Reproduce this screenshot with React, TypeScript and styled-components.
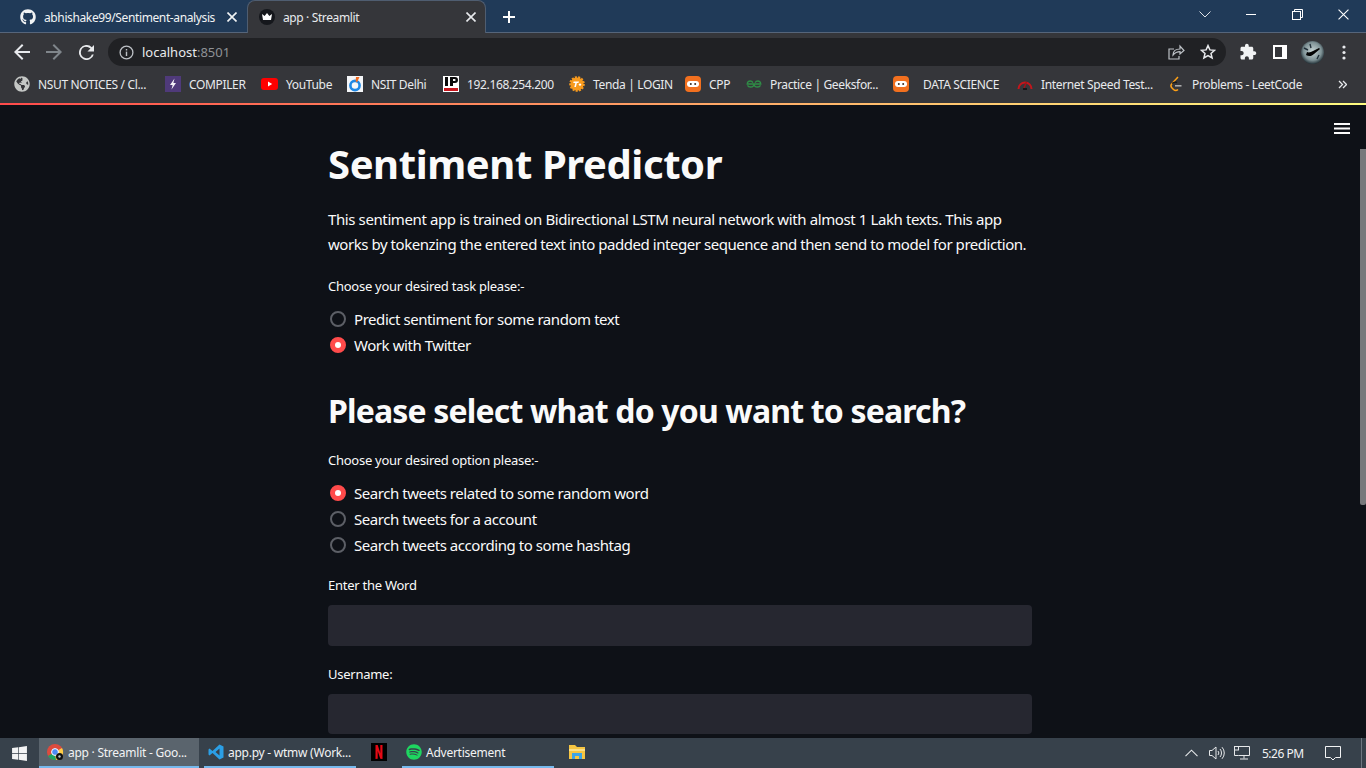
import React from "react";
import styled, { createGlobalStyle } from "styled-components";
import { FaGithub, FaGlobeAmericas, FaSpotify, FaWindows } from "react-icons/fa";

const GlobalStyle = createGlobalStyle`
    html, body {
        margin: 0;
        padding: 0;
        height: 100%;
        overflow: hidden;
        background: #0e1117;
    }
    * {
        box-sizing: border-box;
    }
`;

const Shell = styled.div`
    width: 1366px;
    height: 768px;
    display: flex;
    flex-direction: column;
    overflow: hidden;
    font-family: "Noto Sans", "Liberation Sans", sans-serif;
`;

const TabStrip = styled.div`
    height: 33px;
    background: #203a58;
    box-shadow: inset 0 -1px #56657a;
    display: flex;
    padding-left: 8px;
    color: #fff;
    flex: none;
`;

const Tab = styled.div<{ $active?: boolean }>`
    width: 239px;
    height: 33px;
    display: flex;
    align-items: center;
    gap: 8px;
    padding: 0 9px 0 11px;
    font-size: 12px;
    letter-spacing: -0.38px;
    border-radius: 8px 8px 0 0;
    color: ${(p) => (p.$active ? "#e8eaed" : "#f1f3f4")};
    background: ${(p) => (p.$active ? "#35363a" : "transparent")};
    border: 1px solid ${(p) => (p.$active ? "#4f5d70" : "transparent")};
    border-bottom: none;
`;

const TabTitle = styled.span`
    flex: 1;
    white-space: nowrap;
    overflow: hidden;
`;

const NewTab = styled.div`
    width: 46px;
    display: flex;
    justify-content: center;
    align-items: center;
`;

const Spacer = styled.div`
    flex: 1;
`;

const WindowButton = styled.div`
    width: 46px;
    height: 29px;
    display: flex;
    align-items: center;
    justify-content: center;
    color: #fff;
`;

const Toolbar = styled.div`
    height: 38px;
    background: #35363a;
    display: flex;
    align-items: center;
    padding: 0 5px 0 6px;
    color: #e8eaed;
    flex: none;
`;

const NavButton = styled.div<{ $dim?: boolean }>`
    width: 32px;
    display: flex;
    justify-content: center;
    color: ${(p) => (p.$dim ? "#80868b" : "#e8eaed")};
`;

const Omnibox = styled.div`
    width: 1118px;
    height: 28px;
    margin: 0 6px;
    border-radius: 14px;
    background: #202124;
    display: flex;
    align-items: center;
    padding: 0 2px 0 11px;
    font-size: 13px;
`;

const Host = styled.span`
    margin-left: 8px;
`;

const Port = styled.span`
    color: #8f9296;
`;

const OmniIcon = styled.div`
    width: 32px;
    display: flex;
    justify-content: center;
    color: #bdc1c6;
`;

const ToolIcon = styled.div`
    width: 32px;
    display: flex;
    justify-content: center;
    align-items: center;
`;

const Bookmarks = styled.div`
    height: 32px;
    background: #35363a;
    display: flex;
    align-items: flex-start;
    padding: 5px 19px 0 14px;
    color: #e8eaed;
    font-size: 12px;
    letter-spacing: -0.35px;
    flex: none;
`;

const Bookmark = styled.div<{ $width: number; $gap?: number }>`
    width: ${(p) => p.$width}px;
    height: 16px;
    display: flex;
    align-items: center;
    gap: ${(p) => p.$gap ?? 8}px;
    white-space: nowrap;
`;

const OverflowChevron = styled.div`
    height: 16px;
    display: flex;
    align-items: center;
`;

const RainbowLine = styled.div`
    height: 2px;
    flex: none;
    background: linear-gradient(90deg, #ff4b4b, #fffd80);
`;

const Viewport = styled.div`
    flex: 1;
    min-height: 0;
    background: #0e1117;
    position: relative;
    overflow: hidden;
    display: flex;
    justify-content: center;
    padding-right: 6px;
    color: #fafafa;
`;

const HamburgerButton = styled.div`
    position: absolute;
    top: 18px;
    right: 16px;
    display: flex;
`;

const ScrollThumb = styled.div`
    position: absolute;
    top: 44px;
    right: 0;
    width: 6px;
    height: 356px;
    background: #77787b;
    border-radius: 0 0 2px 2px;
`;

const Content = styled.main`
    width: 704px;
    padding-top: 33px;
    flex: none;
`;

const Title = styled.h1`
    margin: 0 0 17px;
    font-size: 40px;
    line-height: 52px;
    font-weight: 700;
    letter-spacing: -0.4px;
`;

const Paragraph = styled.p`
    margin: 0 0 20px;
    font-size: 15px;
    line-height: 25px;
`;

const ParagraphLine = styled.span<{ $spacing: number }>`
    display: block;
    white-space: nowrap;
    letter-spacing: ${(p) => p.$spacing}px;
`;

const Label = styled.div`
    font-size: 13px;
    line-height: 18px;
    letter-spacing: -0.26px;
    margin-bottom: 11px;
`;

const RadioList = styled.div`
    display: flex;
    flex-direction: column;
`;

const RadioRow = styled.div`
    height: 26px;
    display: flex;
    align-items: center;
    gap: 8px;
    padding-left: 2px;
    font-size: 15px;
    letter-spacing: -0.44px;
`;

const RadioDot = styled.span<{ $checked?: boolean }>`
    width: 16px;
    height: 16px;
    border-radius: 50%;
    flex: none;
    background: ${(p) => (p.$checked ? "#ff4b4b" : "transparent")};
    border: ${(p) => (p.$checked ? "5px solid #ff4b4b" : "2px solid #5c5f66")};
    display: flex;
    &::after {
        content: "";
        display: ${(p) => (p.$checked ? "block" : "none")};
        width: 6px;
        height: 6px;
        border-radius: 50%;
        background: #fff;
    }
`;

const Heading = styled.h2`
    margin: 32px 0 19px;
    font-size: 32px;
    line-height: 42px;
    font-weight: 700;
    letter-spacing: -0.84px;
`;

const Fields = styled.div`
    margin-top: 18.4px;
    display: flex;
    flex-direction: column;
    gap: 19.2px;
`;

const TextBox = styled.div`
    height: 40.4px;
    border-radius: 4px;
    background: #262730;
`;

const Taskbar = styled.div`
    height: 30px;
    flex: none;
    background: #37414b;
    display: flex;
    align-items: stretch;
    gap: 2px;
    color: #f2f3f4;
    font-size: 12px;
    letter-spacing: -0.25px;
`;

const StartButton = styled.div`
    width: 37px;
    display: flex;
    align-items: center;
    justify-content: center;
    padding-left: 2px;
`;

const TaskItem = styled.div<{ $width: number; $active?: boolean; $open?: boolean; $center?: boolean }>`
    width: ${(p) => p.$width}px;
    display: flex;
    align-items: center;
    justify-content: ${(p) => (p.$center ? "center" : "flex-start")};
    gap: 4px;
    padding-left: ${(p) => (p.$center ? 0 : p.$active ? 8 : 4)}px;
    white-space: nowrap;
    overflow: hidden;
    background: ${(p) => (p.$active ? "#5a646d" : "transparent")};
    border-bottom: 2px solid ${(p) => (p.$open ? "#76b9ed" : "transparent")};
`;

const TaskGap = styled.div`
    width: 1px;
`;

const Tray = styled.div`
    margin-left: auto;
    display: flex;
    align-items: center;
    padding-right: 4px;
`;

const TrayIcon = styled.div`
    width: 25px;
    display: flex;
    justify-content: center;
`;

const Clock = styled.span`
    width: 41px;
    margin: 0 22px 0 8px;
    white-space: nowrap;
    letter-spacing: -0.5px;
`;

const ShowDesktop = styled.div`
    width: 1px;
    height: 30px;
    margin-left: 20px;
    background: #6d7680;
`;

/* chrome glyphs */
const BackIcon = ({ flip }: { flip?: boolean }) => (
    <svg width="16" height="16" viewBox="0 0 16 16" style={flip ? { transform: "scaleX(-1)" } : undefined}>
        <path d="M16 7H3.8l5.6-5.6L8 0 0 8l8 8 1.4-1.4L3.8 9H16z" fill="currentColor" />
    </svg>
);

const ReloadIcon = () => (
    <svg width="15" height="15" viewBox="0 0 16 16">
        <path
            d="M13.65 2.35A8 8 0 1 0 15.73 10h-2.08A6 6 0 1 1 8 2c1.66 0 3.14.69 4.22 1.78L9 7h7V0l-2.35 2.35z"
            fill="currentColor"
        />
    </svg>
);

const CloseIcon = ({ size = 10, width = 1.6 }: { size?: number; width?: number }) => (
    <svg width={size} height={size} viewBox="0 0 10 10">
        <path d="M.5.5l9 9M9.5.5l-9 9" stroke="currentColor" strokeWidth={width} fill="none" />
    </svg>
);

const InfoIcon = () => (
    <svg width="15" height="15" viewBox="0 0 15 15">
        <circle cx="7.5" cy="7.5" r="6.4" fill="none" stroke="#bdc1c6" strokeWidth="1.3" />
        <rect x="6.8" y="6.6" width="1.4" height="4.4" fill="#bdc1c6" />
        <rect x="6.8" y="4" width="1.4" height="1.5" fill="#bdc1c6" />
    </svg>
);

const ShareIcon = () => (
    <svg width="17" height="16" viewBox="0 0 17 16" fill="none" stroke="currentColor" strokeWidth="1.2">
        <path d="M6 5H1v10h10v-3" />
        <path d="M5 11c0-4 3-6 7-6V2l4 4.5L12 10V7.6c-3 0-5 1-7 3.4z" />
    </svg>
);

const StarIcon = () => (
    <svg width="16" height="16" viewBox="0 0 16 16">
        <path
            d="M8 1.6l1.9 4.3 4.7.4-3.6 3.1 1.1 4.6L8 11.6 3.9 14l1.1-4.6-3.6-3.1 4.7-.4z"
            fill="none"
            stroke="#e8eaed"
            strokeWidth="1.5"
        />
    </svg>
);

const ExtensionIcon = () => (
    <svg width="18" height="18" viewBox="0 0 24 24">
        <path
            d="M20.5 11H19V7c0-1.1-.9-2-2-2h-4V3.5C13 2.12 11.88 1 10.5 1S8 2.12 8 3.5V5H4c-1.1 0-1.99.9-1.99 2v3.8H3.5c1.49 0 2.7 1.21 2.7 2.7s-1.21 2.7-2.7 2.7H2V20c0 1.1.9 2 2 2h3.8v-1.5c0-1.49 1.21-2.7 2.7-2.7 1.49 0 2.7 1.21 2.7 2.7V22H17c1.1 0 2-.9 2-2v-4h1.5c1.38 0 2.5-1.12 2.5-2.5S21.88 11 20.5 11z"
            fill="#f1f3f4"
        />
    </svg>
);

const SidePanelIcon = () => (
    <svg width="14" height="14" viewBox="0 0 14 14">
        <rect width="14" height="14" fill="#fff" />
        <rect x="2" y="2" width="7" height="10" fill="#35363a" />
    </svg>
);

const ProfileIcon = () => (
    <svg width="23" height="23" viewBox="0 0 23 23">
        <defs>
            <radialGradient id="pf" cx="50%" cy="45%" r="55%">
                <stop offset="0" stopColor="#c9d6d6" />
                <stop offset="0.7" stopColor="#7f9296" />
                <stop offset="1" stopColor="#26343a" />
            </radialGradient>
        </defs>
        <circle cx="11.5" cy="11.5" r="11.5" fill="url(#pf)" />
        <path d="M5 14c3 2 6 1 8-1l6-5-1-1-6 3c-2 1-4 2-6 1z" fill="#050505" />
        <path d="M3 7l4 2M16 18l2-4M9 3l1 4" stroke="#22303a" strokeWidth="1.4" />
    </svg>
);

const DotsIcon = () => (
    <svg width="4" height="15" viewBox="0 0 4 15">
        <circle cx="2" cy="2" r="1.6" fill="#e8eaed" />
        <circle cx="2" cy="7.5" r="1.6" fill="#e8eaed" />
        <circle cx="2" cy="13" r="1.6" fill="#e8eaed" />
    </svg>
);

/* favicons */
const CompilerIcon = () => (
    <svg width="16" height="16" viewBox="0 0 16 16">
        <rect width="16" height="16" fill="#4f3a7a" />
        <path d="M9.5 2.5L5 9h2.6L6.5 13.5 11 7H8.4z" fill="#f4f2f8" />
    </svg>
);

const YoutubeIcon = () => (
    <svg width="17" height="16" viewBox="0 0 17 16">
        <rect x="0" y="2" width="17" height="12" rx="3" fill="#ff0000" />
        <path d="M7 5.5L11.2 8 7 10.5z" fill="#fff" />
    </svg>
);

const NsitIcon = () => (
    <svg width="16" height="16" viewBox="0 0 16 16">
        <rect width="16" height="16" fill="#f4f6f8" />
        <circle cx="8" cy="9.5" r="4.6" fill="none" stroke="#1e88e5" strokeWidth="2.6" />
        <path d="M9 1h3.5L10 6.5 8.6 5z" fill="#f26b21" />
    </svg>
);

const IpIcon = () => (
    <svg width="16" height="16" viewBox="0 0 16 16">
        <rect width="16" height="16" fill="#fff" />
        <path d="M2 1h3v9H2zM7 1h5a3 3 0 0 1 0 6H10v3H7zM10 3v2h1.6a1 1 0 0 0 0-2z" fill="#0a0a0a" />
        <rect x="1" y="12" width="14" height="3" fill="#c8161d" />
    </svg>
);

const TendaIcon = () => (
    <svg width="16" height="16" viewBox="0 0 16 16">
        <circle cx="8" cy="8" r="6.6" fill="#f79a1e" stroke="#f79a1e" strokeWidth="2.4" strokeDasharray="2 1.2" />
        <path d="M4.6 5.5h5.4L9.4 7H7.9l-1 4H5.3l1-4H4.3z" fill="#fff" />
        <circle cx="11" cy="8.6" r="1.2" fill="#fff" />
    </svg>
);

const NinjaIcon = () => (
    <svg width="16" height="16" viewBox="0 0 16 16">
        <rect width="16" height="16" rx="4" fill="#f2701f" />
        <rect x="2" y="5" width="12" height="6" rx="3" fill="#fff" />
        <circle cx="5.8" cy="8" r="1" fill="#3a2a20" />
        <circle cx="10.2" cy="8" r="1" fill="#3a2a20" />
    </svg>
);

const GeeksIcon = () => (
    <svg width="16" height="16" viewBox="0 0 16 16" fill="none" stroke="#2f8d46" strokeWidth="1.3">
        <path d="M8 8H1.2c.2-1.8 1.4-3 3-3 1.2 0 2.2.6 2.7 1.6M8 8c0 1.8-1.5 3-3.5 3-1.4 0-2.5-.6-3-1.6" />
        <path d="M8 8h6.8c-.2-1.8-1.4-3-3-3-1.2 0-2.2.6-2.7 1.6M8 8c0 1.8 1.5 3 3.5 3 1.4 0 2.5-.6 3-1.6" />
    </svg>
);

const SpeedIcon = () => (
    <svg width="16" height="16" viewBox="0 0 16 16" fill="none" stroke="#c4161c">
        <path d="M1.5 13a6.5 6.5 0 0 1 13 0" strokeWidth="2" />
        <path d="M7 12L9.5 6" stroke="#a01218" strokeWidth="1.6" />
        <path d="M6 13h4" stroke="#15171a" strokeWidth="2" />
    </svg>
);

const LeetIcon = () => (
    <svg width="16" height="16" viewBox="0 0 16 16" fill="none">
        <path d="M10 1L4 7.5c-1.3 1.4-1.3 3.2 0 4.5l1.5 1.5c1.3 1.2 3.2 1.2 4.5 0" stroke="#ffa116" strokeWidth="1.5" />
        <path d="M4 7.5C5.3 6.2 7 5.8 9 6.5" stroke="#15171a" strokeWidth="1.5" />
        <path d="M7 9.8h6.5" stroke="#b3b3b3" strokeWidth="1.5" />
    </svg>
);

/* taskbar glyphs */
const ChromeIcon = () => (
    <svg width="17" height="17" viewBox="0 0 17 17">
        <circle cx="8" cy="8" r="8" fill="#dd4b3e" />
        <path d="M8 8L1 12a8 8 0 0 0 8 4z" fill="#1da462" />
        <path d="M8 8l7-4a8 8 0 0 1-6 12z" fill="#ffcd46" />
        <circle cx="8" cy="8" r="3.4" fill="#4c8bf5" stroke="#fff" />
        <circle cx="12.5" cy="12.5" r="3.5" fill="#111" />
        <circle cx="12.5" cy="12.5" r="1.2" fill="#b9c4c6" />
    </svg>
);

const VsCodeIcon = () => (
    <svg width="16" height="16" viewBox="0 0 16 16">
        <path d="M11.5 0.5L15.5 2.5V13.5L11.5 15.5L4.5 9L1.5 11.5L0.5 10.5V5.5L1.5 4.5L4.5 7zM11.5 4.5L7.5 8L11.5 11.5z" fill="#2b9fe6" />
    </svg>
);

const NetflixIcon = () => (
    <svg width="16" height="18" viewBox="0 0 16 18">
        <rect width="16" height="18" fill="#000" />
        <path d="M4.5 2h2.2l2.6 8V2h2.2v14l-2.2-.3-2.6-7.7v7.7l-2.2.3z" fill="#e50914" />
    </svg>
);

const FolderIcon = () => (
    <svg width="16" height="14" viewBox="0 0 16 14">
        <path d="M0 0h6l2 2h8v12H0z" fill="#f5c542" />
        <rect x="0" y="4" width="16" height="2" fill="#fbdf86" />
        <path d="M3 8h10v6h-3v-3H6v3H3z" fill="#3ba4e8" />
    </svg>
);

const ChevronUpIcon = () => (
    <svg width="13" height="8" viewBox="0 0 13 8">
        <path d="M.5 7.2L6.5 1.2l6 6" fill="none" stroke="#e6e8ea" strokeWidth="1.1" />
    </svg>
);

const VolumeIcon = () => (
    <svg width="16" height="14" viewBox="0 0 16 14" fill="none" stroke="#e6e8ea" strokeWidth="1">
        <path d="M.5 4.5h2.5L7 1v12L3 9.5H.5z" />
        <path d="M9 5a3 3 0 0 1 0 4M11 3a6 6 0 0 1 0 8M13 1.2a8.5 8.5 0 0 1 0 11.6" />
    </svg>
);

const NetworkIcon = () => (
    <svg width="16" height="14" viewBox="0 0 16 14" fill="none" stroke="#e6e8ea" strokeWidth="1">
        <path d="M4.5.5h11v9h-11" />
        <rect x=".5" y=".5" width="4" height="3.5" />
        <path d="M.5 4v5.500h4M10 9.500v3M6 13h8" />
    </svg>
);

const NotificationIcon = () => (
    <svg width="16" height="16" viewBox="0 0 16 16">
        <path d="M.5 1.500h15v11h-5l-2.500 2.500-2.500-2.500h-5z" fill="none" stroke="#f2f3f4" strokeWidth="1" />
    </svg>
);

const bookmarks = [
    { width: 151, label: "NSUT NOTICES / Cl...", icon: <FaGlobeAmericas size={16} color="#c4c7c5" /> },
    { width: 96, label: "COMPILER", icon: <CompilerIcon /> },
    { width: 86, label: "YouTube", icon: <YoutubeIcon /> },
    { width: 96, label: "NSIT Delhi", icon: <NsitIcon /> },
    { width: 126, label: "192.168.254.200", icon: <IpIcon /> },
    { width: 116, label: "Tenda | LOGIN", icon: <TendaIcon /> },
    { width: 61, label: "CPP", icon: <NinjaIcon /> },
    { width: 147, label: "Practice | Geeksfor...", icon: <GeeksIcon /> },
    { width: 124, label: "DATA SCIENCE", icon: <NinjaIcon />, gap: 14 },
    { width: 151, label: "Internet Speed Test...", icon: <SpeedIcon /> },
    { width: 150, label: "Problems - LeetCode", icon: <LeetIcon /> }
];

const App: React.FC = () => {
    return (
        <Shell>
            <GlobalStyle />
            <TabStrip>
                <Tab>
                    <FaGithub size={16} />
                    <TabTitle>abhishake99/Sentiment-analysis</TabTitle>
                    <CloseIcon />
                </Tab>
                <Tab $active>
                    <svg width="16" height="16" viewBox="0 0 16 16">
                        <circle cx="8" cy="8" r="8" fill="#15171c" />
                        <path d="M3 5l2.600 2L8 4l2.400 3L13 5l-1 6H4z" fill="#fff" />
                    </svg>
                    <TabTitle>app · Streamlit</TabTitle>
                    <CloseIcon />
                </Tab>
                <NewTab>
                    <svg width="12" height="12" viewBox="0 0 12 12">
                        <path d="M6 0v12M0 6h12" stroke="#fff" strokeWidth="2" />
                    </svg>
                </NewTab>
                <Spacer />
                <WindowButton>
                    <svg width="12" height="7" viewBox="0 0 12 7">
                        <path d="M.5.5L6 6l5.500-5.500" fill="none" stroke="#dfe3e8" strokeWidth="1" />
                    </svg>
                </WindowButton>
                <WindowButton>
                    <svg width="10" height="1" viewBox="0 0 10 1">
                        <rect width="10" height="1" fill="#fff" />
                    </svg>
                </WindowButton>
                <WindowButton>
                    <svg width="11" height="11" viewBox="0 0 11 11" fill="none" stroke="#fff" strokeWidth="1">
                        <rect x=".5" y="2.500" width="8" height="8" />
                        <path d="M2.500 2.500v-2h8v8h-2" />
                    </svg>
                </WindowButton>
                <WindowButton>
                    <CloseIcon size={11} width={1} />
                </WindowButton>
            </TabStrip>
            <Toolbar>
                <NavButton>
                    <BackIcon />
                </NavButton>
                <NavButton $dim>
                    <BackIcon flip />
                </NavButton>
                <NavButton>
                    <ReloadIcon />
                </NavButton>
                <Omnibox>
                    <InfoIcon />
                    <Host>localhost</Host>
                    <Port>:8501</Port>
                    <Spacer />
                    <OmniIcon>
                        <ShareIcon />
                    </OmniIcon>
                    <OmniIcon>
                        <StarIcon />
                    </OmniIcon>
                </Omnibox>
                <ToolIcon>
                    <ExtensionIcon />
                </ToolIcon>
                <ToolIcon>
                    <SidePanelIcon />
                </ToolIcon>
                <ToolIcon>
                    <ProfileIcon />
                </ToolIcon>
                <ToolIcon>
                    <DotsIcon />
                </ToolIcon>
            </Toolbar>
            <Bookmarks>
                {bookmarks.map((b) => (
                    <Bookmark key={b.label} $width={b.width} $gap={b.gap}>
                        {b.icon}
                        {b.label}
                    </Bookmark>
                ))}
                <Spacer />
                <OverflowChevron>
                    <svg width="9" height="9" viewBox="0 0 9 9" fill="none" stroke="#e8eaed" strokeWidth="1.300">
                        <path d="M1 1l3.500 3.500L1 8M5 1l3.500 3.500L5 8" />
                    </svg>
                </OverflowChevron>
            </Bookmarks>
            <RainbowLine />
            <Viewport>
                <Content>
                    <Title>Sentiment Predictor</Title>
                    <Paragraph>
                        <ParagraphLine $spacing={-0.39}>
                            This sentiment app is trained on Bidirectional LSTM neural network with almost 1 Lakh texts. This app
                        </ParagraphLine>
                        <ParagraphLine $spacing={-0.45}>
                            works by tokenzing the entered text into padded integer sequence and then send to model for prediction.
                        </ParagraphLine>
                    </Paragraph>
                    <Label>Choose your desired task please:-</Label>
                    <RadioList>
                        <RadioRow>
                            <RadioDot />
                            Predict sentiment for some random text
                        </RadioRow>
                        <RadioRow>
                            <RadioDot $checked />
                            Work with Twitter
                        </RadioRow>
                    </RadioList>
                    <Heading>Please select what do you want to search?</Heading>
                    <Label>Choose your desired option please:-</Label>
                    <RadioList>
                        <RadioRow>
                            <RadioDot $checked />
                            Search tweets related to some random word
                        </RadioRow>
                        <RadioRow>
                            <RadioDot />
                            Search tweets for a account
                        </RadioRow>
                        <RadioRow>
                            <RadioDot />
                            Search tweets according to some hashtag
                        </RadioRow>
                    </RadioList>
                    <Fields>
                        <div>
                            <Label>Enter the Word</Label>
                            <TextBox />
                        </div>
                        <div>
                            <Label>Username:</Label>
                            <TextBox />
                        </div>
                    </Fields>
                </Content>
                <HamburgerButton>
                    <svg width="16" height="11" viewBox="0 0 16 11">
                        <rect width="16" height="2" fill="#fafafa" />
                        <rect y="4.500" width="16" height="2" fill="#fafafa" />
                        <rect y="9" width="16" height="2" fill="#fafafa" />
                    </svg>
                </HamburgerButton>
                <ScrollThumb />
            </Viewport>
            <Taskbar>
                <StartButton>
                    <FaWindows size={17} />
                </StartButton>
                <TaskItem $width={160} $active $open>
                    <ChromeIcon />
                    app · Streamlit - Goo...
                </TaskItem>
                <TaskGap />
                <TaskItem $width={152} $open>
                    <VsCodeIcon />
                    app.py - wtmw (Work...
                </TaskItem>
                <TaskItem $width={42} $center>
                    <NetflixIcon />
                </TaskItem>
                <TaskItem $width={152} $open>
                    <FaSpotify size={16} color="#1ed760" />
                    Advertisement
                </TaskItem>
                <TaskItem $width={42} $center>
                    <FolderIcon />
                </TaskItem>
                <Tray>
                    <TrayIcon>
                        <ChevronUpIcon />
                    </TrayIcon>
                    <TrayIcon>
                        <VolumeIcon />
                    </TrayIcon>
                    <TrayIcon>
                        <NetworkIcon />
                    </TrayIcon>
                    <Clock>5:26 PM</Clock>
                    <NotificationIcon />
                    <ShowDesktop />
                </Tray>
            </Taskbar>
        </Shell>
    );
};

export default App;
